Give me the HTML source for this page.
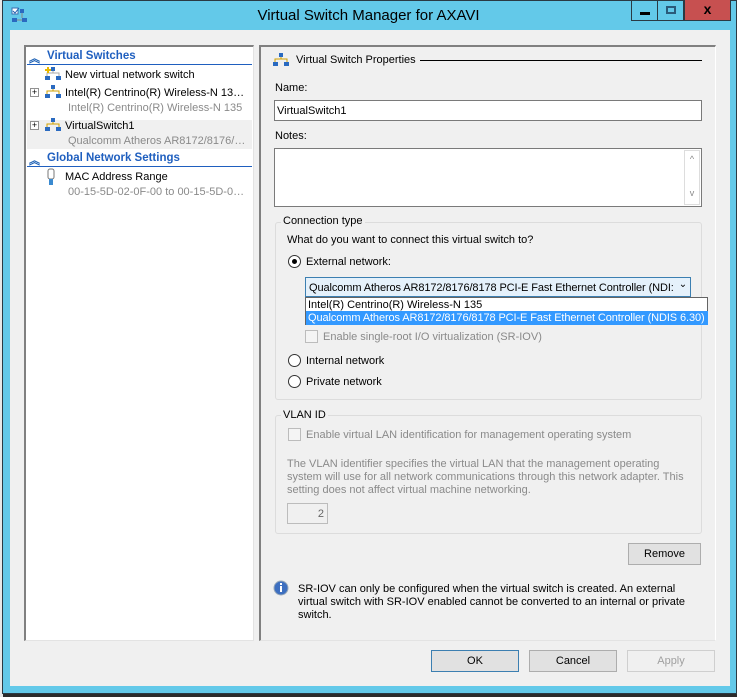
<!DOCTYPE html>
<html><head><style>
*{margin:0;padding:0;box-sizing:border-box}
body{width:737px;height:697px;overflow:hidden;background:#2b2b2b;font-family:"Liberation Sans",sans-serif;font-size:11px;color:#000;position:relative}
.a{position:absolute;white-space:nowrap}
.t{margin-top:1px}
.g{color:#8a8a8a}
.btn{position:absolute;height:22px;border:1px solid #adadad;background:#e1e1e1;text-align:center;line-height:20px}
.rad{position:absolute;width:13px;height:13px;border:1px solid #333;border-radius:50%;background:#fff}
.box{position:absolute;width:13px;height:13px;border:1px solid #bcbcbc;background:#f4f4f4}
.plus{position:absolute;width:9px;height:9px;border:1px solid #919191;background:#fff;font-size:9px;line-height:7px;text-align:center}
</style></head><body>
<div class="a" style="left:0;top:0;width:3px;height:697px;background:#e8e8e8"></div>
<div class="a" style="left:2px;top:0;width:735px;height:694px;background:#63c9e9;border:1px solid #2a3a44"></div>
<svg class="a" style="left:11px;top:7px" width="18" height="18"><rect x="1" y="1" width="6" height="6" fill="#fff" stroke="#3a6fb0"/><path d="M2 4l2 2 4-5" stroke="#2060b0" fill="none"/><rect x="1" y="11" width="5" height="4" fill="#2a6ac0"/><rect x="11" y="11" width="5" height="4" fill="#2a6ac0"/><rect x="9" y="2" width="4" height="4" fill="#2a6ac0"/><path d="M6 13h5M11 6v5" stroke="#888"/></svg>
<div class="a" style="left:0;top:7px;width:737px;text-align:center;font-size:15px;color:#000">Virtual Switch Manager for AXAVI</div>
<div class="a" style="left:631px;top:0;width:27px;height:21px;border:1px solid #2a3a44;border-top:0"><div class="a" style="left:8px;top:12px;width:10px;height:3px;background:#000"></div></div>
<div class="a" style="left:657px;top:0;width:27px;height:21px;border:1px solid #2a3a44;border-top:0"><div class="a" style="left:8px;top:6px;width:10px;height:8px;border:2px solid #2a5a7a"></div></div>
<div class="a" style="left:684px;top:0;width:47px;height:21px;background:#c75050;border:1px solid #2a3a44;border-top:0;text-align:center;font-weight:bold;font-size:14px;line-height:19px">x</div>
<div class="a" style="left:10px;top:30px;width:720px;height:656px;background:#f0f0f0"></div>
<div class="a" style="left:24px;top:45px;width:230px;height:596px;background:#fff;border:1px solid #a0a0a0;border-right-color:#e3e3e3;border-bottom-color:#e3e3e3;border-left:2px solid #808080;border-top:2px solid #808080"></div>
<div class="a" style="left:27px;top:120px;width:225px;height:29px;background:#f0f0f0"></div>
<div class="a" style="left:29px;top:50px;color:#1a5fb4;font-weight:bold;font-size:11px">︽</div>
<div class="a" style="left:47px;top:50px;color:#1f5fbf;font-weight:bold;font-size:11.5px">Virtual Switches</div>
<div class="a" style="left:27px;top:64px;width:225px;height:1px;background:#1f5fbf"></div>
<div class="a" style="left:29px;top:152px;color:#1a5fb4;font-weight:bold;font-size:11px">︽</div>
<div class="a" style="left:47px;top:152px;color:#1f5fbf;font-weight:bold;font-size:11.5px">Global Network Settings</div>
<div class="a" style="left:27px;top:166px;width:225px;height:1px;background:#1f5fbf"></div>
<svg class="a" style="left:44px;top:66px" width="18" height="16"><rect x="7" y="1" width="4" height="4" fill="#2a6ac0"/><rect x="1" y="10" width="5" height="4" fill="#2a6ac0"/><rect x="12" y="10" width="5" height="4" fill="#2a6ac0"/><path d="M3 10V7h12v3M9 5v2" stroke="#aaa" fill="none"/><path d="M1 4h6M4 1v6" stroke="#e8b800" stroke-width="2"/></svg>
<div class="a" style="left:65px;top:69px">New virtual network switch</div>
<div class="plus" style="left:30px;top:88px">+</div>
<svg class="a" style="left:44px;top:84px" width="18" height="16"><rect x="7" y="1" width="4" height="4" fill="#2a6ac0"/><rect x="1" y="10" width="5" height="4" fill="#2a6ac0"/><rect x="12" y="10" width="5" height="4" fill="#2a6ac0"/><path d="M3 10V7h12v3M9 5v2" stroke="#d0a000" fill="none"/></svg>
<div class="a" style="left:65px;top:87px">Intel(R) Centrino(R) Wireless-N 13…</div>
<div class="a g" style="left:68px;top:102px">Intel(R) Centrino(R) Wireless-N 135</div>
<div class="plus" style="left:30px;top:121px">+</div>
<svg class="a" style="left:44px;top:117px" width="18" height="16"><rect x="7" y="1" width="4" height="4" fill="#2a6ac0"/><rect x="1" y="10" width="5" height="4" fill="#2a6ac0"/><rect x="12" y="10" width="5" height="4" fill="#2a6ac0"/><path d="M3 10V7h12v3M9 5v2" stroke="#d0a000" fill="none"/></svg>
<div class="a" style="left:65px;top:120px">VirtualSwitch1</div>
<div class="a g" style="left:68px;top:135px">Qualcomm Atheros AR8172/8176/…</div>
<svg class="a" style="left:46px;top:168px" width="10" height="18"><rect x="2" y="1" width="6" height="10" rx="2" fill="#fff" stroke="#777"/><rect x="3" y="11" width="4" height="6" fill="#3a8ad0"/></svg>
<div class="a" style="left:65px;top:171px">MAC Address Range</div>
<div class="a g" style="left:68px;top:186px">00-15-5D-02-0F-00 to 00-15-5D-0…</div>
<div class="a" style="left:259px;top:45px;width:457px;height:596px;border-left:2px solid #808080;border-top:2px solid #808080;border-right:1px solid #fff;border-bottom:1px solid #e3e3e3"></div>
<svg class="a" style="left:272px;top:52px" width="18" height="16"><rect x="7" y="1" width="4" height="4" fill="#2a6ac0"/><rect x="1" y="10" width="5" height="4" fill="#2a6ac0"/><rect x="12" y="10" width="5" height="4" fill="#2a6ac0"/><path d="M3 10V7h12v3M9 5v2" stroke="#d0a000" fill="none"/></svg>
<div class="a" style="left:296px;top:54px">Virtual Switch Properties</div>
<div class="a" style="left:420px;top:60px;width:282px;height:1px;background:#000"></div>
<div class="a" style="left:275px;top:82px">Name:</div>
<div class="a" style="left:274px;top:100px;width:428px;height:21px;border:1px solid #7a7a7a;background:#fff;padding:4px 2px">VirtualSwitch1</div>
<div class="a" style="left:275px;top:130px">Notes:</div>
<div class="a" style="left:274px;top:148px;width:428px;height:59px;border:1px solid #7a7a7a;background:#fff"></div>
<div class="a" style="left:684px;top:150px;width:16px;height:55px;border:1px solid #ddd;background:#fff"><div style="text-align:center;color:#888;font-size:9px;line-height:16px">^</div><div style="position:absolute;top:37px;width:14px;text-align:center;color:#888;font-size:9px">v</div></div>
<div class="a" style="left:275px;top:222px;width:427px;height:178px;border:1px solid #dcdcdc;border-radius:3px"></div>
<div class="a" style="left:281px;top:215px;background:#f0f0f0;padding:0 2px">Connection type</div>
<div class="a" style="left:287px;top:234px">What do you want to connect this virtual switch to?</div>
<div class="rad" style="left:288px;top:255px"><div style="margin:3px;width:5px;height:5px;border-radius:50%;background:#000"></div></div>
<div class="a" style="left:306px;top:256px">External network:</div>
<div class="a" style="left:305px;top:277px;width:386px;height:20px;border:1px solid #3c7fb1;background:#e5f1fb;padding:4px 3px;overflow:hidden;letter-spacing:-0.1px">Qualcomm Atheros AR8172/8176/8178 PCI-E Fast Ethernet Controller (NDI:</div>
<div class="a" style="left:677px;top:279px;width:12px;height:16px;background:#e5f1fb;font-size:10px;text-align:center">⌄</div>
<div class="a" style="left:305px;top:297px;width:403px;height:28px;border:1px solid #646464;background:#fff"></div>
<div class="a" style="left:306px;top:311px;width:402px;height:14px;background:#3399ff"></div>
<div class="a" style="left:308px;top:299px">Intel(R) Centrino(R) Wireless-N 135</div>
<div class="a" style="left:308px;top:312px;color:#fff;letter-spacing:-0.1px">Qualcomm Atheros AR8172/8176/8178 PCI-E Fast Ethernet Controller (NDIS 6.30)</div>
<div class="box" style="left:305px;top:330px"></div>
<div class="a g" style="left:323px;top:331px">Enable single-root I/O virtualization (SR-IOV)</div>
<div class="rad" style="left:288px;top:354px"></div>
<div class="a" style="left:306px;top:355px">Internal network</div>
<div class="rad" style="left:288px;top:375px"></div>
<div class="a" style="left:306px;top:376px">Private network</div>
<div class="a" style="left:275px;top:415px;width:427px;height:119px;border:1px solid #dcdcdc;border-radius:3px"></div>
<div class="a" style="left:281px;top:409px;background:#f0f0f0;padding:0 2px">VLAN ID</div>
<div class="box" style="left:288px;top:428px"></div>
<div class="a g" style="left:306px;top:429px">Enable virtual LAN identification for management operating system</div>
<div class="a g" style="left:287px;top:458px;line-height:13px">The VLAN identifier specifies the virtual LAN that the management operating<br>system will use for all network communications through this network adapter. This<br>setting does not affect virtual machine networking.</div>
<div class="a g" style="left:287px;top:503px;width:41px;height:21px;border:1px solid #bcbcbc;text-align:right;padding:4px 3px;color:#666">2</div>
<div class="btn" style="left:628px;top:543px;width:73px">Remove</div>
<svg class="a" style="left:273px;top:580px" width="16" height="16"><circle cx="8" cy="8" r="7" fill="#3d6fc0" stroke="#9ab"/><rect x="7" y="6" width="2" height="6" fill="#fff"/><rect x="7" y="3" width="2" height="2" fill="#fff"/></svg>
<div class="a" style="left:298px;top:583px;line-height:13px">SR-IOV can only be configured when the virtual switch is created. An external<br>virtual switch with SR-IOV enabled cannot be converted to an internal or private<br>switch.</div>
<div class="btn" style="left:431px;top:650px;width:88px;border-color:#3c7fb1">OK</div>
<div class="btn" style="left:529px;top:650px;width:88px">Cancel</div>
<div class="btn" style="left:627px;top:650px;width:88px;background:#f0f0f0;border-color:#cfcfcf;color:#a0a0a0">Apply</div>
</body></html>
